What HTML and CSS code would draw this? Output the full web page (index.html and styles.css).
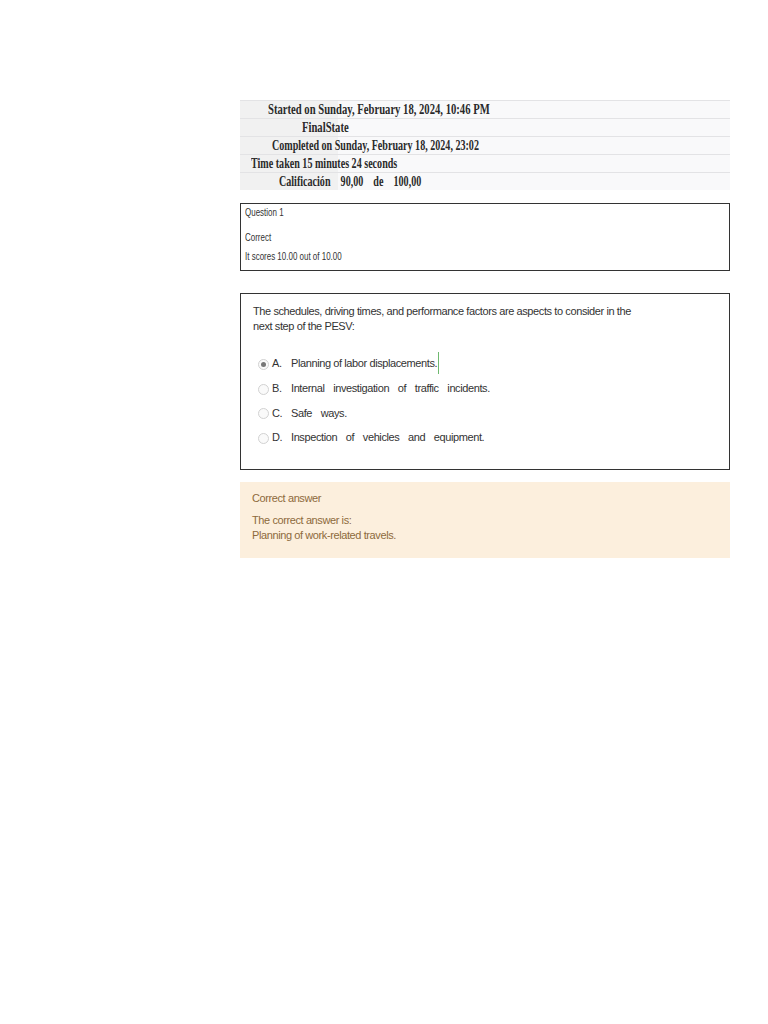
FILE: index.html
```html
<!DOCTYPE html>
<html>
<head>
<meta charset="utf-8">
<link rel="stylesheet" href="styles.css">
</head>
<body>
<div class="page">
  <div class="summary">
    <div class="row r1"><span class="cond">Started on Sunday, February 18, 2024, 10:46 PM</span></div>
    <div class="row r2"><span class="cond">FinalState</span></div>
    <div class="row r3"><span class="cond tight">Completed on Sunday, February 18, 2024, 23:02</span></div>
    <div class="row r4"><span class="cond tight">Time taken 15 minutes 24 seconds</span></div>
    <div class="row r5"><span class="cond tight">Calificación&nbsp;&nbsp;&nbsp; 90,00&nbsp;&nbsp;&nbsp; de&nbsp;&nbsp;&nbsp; 100,00</span></div>
  </div>

  <div class="info">
    <div class="info-line q"><span class="narrow">Question 1</span></div>
    <div class="info-line c"><span class="narrow">Correct</span></div>
    <div class="info-line s"><span class="narrow">It scores 10.00 out of 10.00</span></div>
  </div>

  <div class="question">
    <p class="qtext">The schedules, driving times, and performance factors are aspects to consider in the<br>next step of the PESV:</p>
    <ul class="answers">
      <li class="opt"><span class="radio checked"></span><span class="letter">A.</span><span class="atext">Planning of labor displacements.</span><span class="cursor"></span></li>
      <li class="opt"><span class="radio"></span><span class="letter">B.</span><span class="atext wide">Internal investigation of traffic incidents.</span></li>
      <li class="opt"><span class="radio"></span><span class="letter">C.</span><span class="atext wide">Safe ways.</span></li>
      <li class="opt"><span class="radio"></span><span class="letter">D.</span><span class="atext wide">Inspection of vehicles and equipment.</span></li>
    </ul>
  </div>

  <div class="feedback">
    <p class="fb-title">Correct answer</p>
    <p class="fb-text">The correct answer is:<br>Planning of work-related travels.</p>
  </div>
</div>
</body>
</html>
```

FILE: styles.css
```css
html, body {
  margin: 0;
  padding: 0;
  background: #ffffff;
}

.page {
  margin-left: 240px;
  width: 490px;
  padding-top: 100px;
}

.summary {
  background: #f9f9fa;
}

.row {
  height: 17px;
  border-top: 1px solid #e3e3e5;
  background: linear-gradient(to right, #f1f1f1 0, #f1f1f1 98px, #f9f9fa 98px);
  display: flex;
  align-items: center;
  font-family: "Liberation Serif", "Times New Roman", serif;
  font-weight: bold;
  font-size: 14px;
  color: #2a2a2a;
  white-space: nowrap;
}

.cond {
  display: inline-block;
  transform: scaleX(0.76);
  transform-origin: left center;
}

.cond.tight {
  transform: scaleX(0.72);
}

.r1 { padding-left: 28px; }
.r2 { padding-left: 62px; }
.r3 { padding-left: 32px; }
.r4 { padding-left: 11px; }
.r5 { padding-left: 39px; }

.info {
  margin-top: 13px;
  border: 1px solid #333333;
  height: 68px;
  box-sizing: border-box;
  padding: 1px 4px 0;
  font-family: "Liberation Sans", Arial, sans-serif;
  font-size: 10.5px;
  color: #333333;
}

.info-line {
  white-space: nowrap;
  line-height: 14px;
}

.narrow {
  display: inline-block;
  transform: scaleX(0.76);
  transform-origin: left center;
}

.info-line.q { height: 25px; }
.info-line.c { height: 19px; }

.question {
  margin-top: 22px;
  border: 1px solid #333333;
  height: 177px;
  box-sizing: border-box;
  padding: 10px 12px 0;
  font-family: "Liberation Sans", Arial, sans-serif;
  font-size: 11px;
  letter-spacing: -0.4px;
  color: #333333;
}

.qtext {
  margin: 0;
  line-height: 15px;
}

.answers {
  list-style: none;
  margin: 17px 0 0;
  padding: 0 0 0 5px;
}

.opt {
  display: flex;
  align-items: center;
  height: 24.7px;
  white-space: nowrap;
}

.radio {
  width: 9px;
  height: 9px;
  border: 1px solid #d2d2d2;
  border-radius: 50%;
  background: #fafafa;
  margin-right: 3px;
  margin-top: 2px;
  position: relative;
  flex: none;
}

.radio.checked::after {
  content: "";
  position: absolute;
  left: 2px;
  top: 2px;
  width: 5px;
  height: 5px;
  border-radius: 50%;
  background: #777777;
}

.letter {
  width: 19px;
}

.atext.wide {
  word-spacing: 6px;
}

.cursor {
  width: 1px;
  height: 22px;
  background: #6fb96f;
  margin-left: 1px;
}

.feedback {
  margin-top: 12px;
  background: #fcefdd;
  height: 76px;
  box-sizing: border-box;
  padding: 9px 12px 0;
  font-family: "Liberation Sans", Arial, sans-serif;
  font-size: 11px;
  letter-spacing: -0.4px;
  color: #8d6a3c;
}

.fb-title {
  margin: 0 0 8px;
  line-height: 14px;
}

.fb-text {
  margin: 0;
  line-height: 15px;
}
```
